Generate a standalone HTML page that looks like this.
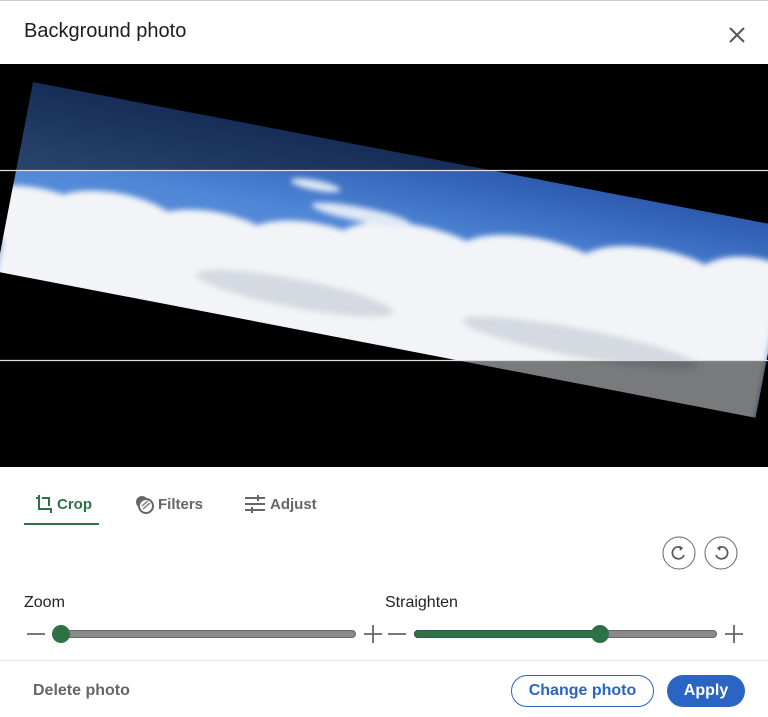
<!DOCTYPE html>
<html><head><style>
*{margin:0;padding:0;box-sizing:border-box}
body{width:768px;height:717px;background:#fff;font-family:"Liberation Sans",sans-serif;position:relative;overflow:hidden}
.abs{position:absolute}
.title{left:24px;top:20px;font-size:20px;color:#1d1d1d}
.tab{top:494px;font-size:15px;font-weight:bold;color:#666;display:flex;align-items:center;gap:2px}
.lbl{font-size:16px;color:#222;top:594px}
.track{height:8px;border-radius:4px;background:#8a8a8a;border:1px solid #666;top:630px}
.knob{width:18px;height:18px;border-radius:50%;background:#2e7146;top:625px}
.btn{height:32px;border-radius:16px;font-size:16px;font-weight:bold;display:flex;align-items:center;justify-content:center;top:675px}
</style></head><body>
<div class="abs" style="left:0;top:0;width:768px;height:1px;background:#ccc"></div>
<div class="abs title">Background photo</div>
<svg class="abs" style="left:727px;top:25px" width="20" height="20"><path d="M3 3L17 17M17 3L3 17" stroke="#555" stroke-width="2"/></svg>
<svg class="abs" style="left:0;top:64px" width="768" height="403" viewBox="0 64 768 403">
<defs>
<linearGradient id="sky" x1="0" y1="0" x2="0" y2="1"><stop offset="0" stop-color="#2d5bb0"/><stop offset="0.4" stop-color="#4f86d6"/><stop offset="1" stop-color="#6f9fe0"/></linearGradient>
<filter id="bl" x="-20%" y="-20%" width="140%" height="140%"><feGaussianBlur stdDeviation="3"/></filter>
<clipPath id="cp"><rect x="33" y="82" width="773" height="193"/></clipPath>
</defs>
<rect x="0" y="64" width="768" height="403" fill="#000"/>
<g transform="rotate(10.9 33 82)">
<g clip-path="url(#cp)">
<rect x="33" y="82" width="773" height="193" fill="url(#sky)"/>
<g filter="url(#bl)" fill="#f2f4f7">
<ellipse cx="60" cy="215" rx="70" ry="30"/>
<ellipse cx="140" cy="205" rx="70" ry="30"/>
<ellipse cx="240" cy="205" rx="70" ry="30"/>
<ellipse cx="340" cy="195" rx="70" ry="28"/>
<ellipse cx="440" cy="180" rx="80" ry="30"/>
<ellipse cx="560" cy="170" rx="80" ry="30"/>
<ellipse cx="680" cy="160" rx="80" ry="32"/>
<ellipse cx="780" cy="150" rx="60" ry="32"/>
<polygon points="33,220 300,210 500,185 806,165 806,280 33,280"/>
<ellipse cx="380" cy="150" rx="50" ry="7" fill="#dfe8f5"/>
<ellipse cx="330" cy="130" rx="25" ry="5" fill="#dfe8f5"/>
</g>
<g fill="#b8bfca" opacity="0.5" filter="url(#bl)">
<ellipse cx="330" cy="240" rx="100" ry="14"/><ellipse cx="620" cy="235" rx="120" ry="14"/>
</g>
</g>
</g>
<rect x="0" y="64" width="768" height="106" fill="#000" opacity="0.5"/>
<rect x="0" y="361" width="768" height="106" fill="#000" opacity="0.5"/>
<line x1="0" y1="170.5" x2="768" y2="170.5" stroke="#ddd" stroke-width="1.2"/>
<line x1="0" y1="360.5" x2="768" y2="360.5" stroke="#ddd" stroke-width="1.2"/>
</svg>
<div class="abs tab" style="left:33px;color:#2e7146"><svg width="22" height="20"><path d="M3 4H6M6 1V15H18V19M9 4H16V12" stroke="#2e7146" stroke-width="2" fill="none"/></svg>Crop</div>
<div class="abs" style="left:24px;top:523px;width:75px;height:2px;background:#2e7146"></div>
<div class="abs tab" style="left:134px"><svg width="22" height="20"><circle cx="8" cy="8" r="6" fill="#666"/><circle cx="12" cy="12" r="7" fill="#fff" stroke="#666" stroke-width="2"/><path d="M8 12L14 7M9 15L16 9" stroke="#888" stroke-width="1.5"/></svg>Filters</div>
<div class="abs tab" style="left:244px"><svg width="24" height="20"><path d="M1 4H21M1 10H21M1 16H21" stroke="#666" stroke-width="2"/><path d="M14 1V7M8 13V19" stroke="#666" stroke-width="2"/></svg>Adjust</div>
<svg class="abs" style="left:661px;top:535px" width="80" height="36"><circle cx="18" cy="18" r="16" fill="none" stroke="#666"/><circle cx="60" cy="18" r="16" fill="none" stroke="#666"/>
<path d="M21 13A6 6 0 1 0 23 20" fill="none" stroke="#555" stroke-width="1.7"/><path d="M18 11L22 13L19 16" fill="#555"/>
<path d="M57 13A6 6 0 1 1 55 20" fill="none" stroke="#555" stroke-width="1.7"/><path d="M60 11L56 13L59 16" fill="#555"/></svg>
<div class="abs lbl" style="left:24px">Zoom</div>
<div class="abs lbl" style="left:385px">Straighten</div>
<svg class="abs" style="left:26px;top:624px" width="360" height="20"><path d="M1 10H19M338 10H356M347 1V19" stroke="#666" stroke-width="1.8"/></svg>
<div class="abs track" style="left:56px;width:300px"></div>
<div class="abs knob" style="left:52px"></div>
<svg class="abs" style="left:387px;top:624px" width="360" height="20"><path d="M1 10H19M338 10H356M347 1V19" stroke="#666" stroke-width="1.8"/></svg>
<div class="abs track" style="left:414px;width:303px"></div>
<div class="abs track" style="left:414px;width:190px;background:#2e7146;border-color:#285f3c"></div>
<div class="abs knob" style="left:591px"></div>
<div class="abs" style="left:0;top:660px;width:768px;height:1px;background:#e6e6e6"></div>
<div class="abs" style="left:33px;top:682px;font-size:16px;font-weight:bold;color:#666">Delete photo</div>
<div class="abs btn" style="left:511px;width:143px;border:1.5px solid #2b65c4;color:#2b65c4">Change photo</div>
<div class="abs btn" style="left:667px;width:78px;background:#2b65c4;color:#fff">Apply</div>
</body></html>
